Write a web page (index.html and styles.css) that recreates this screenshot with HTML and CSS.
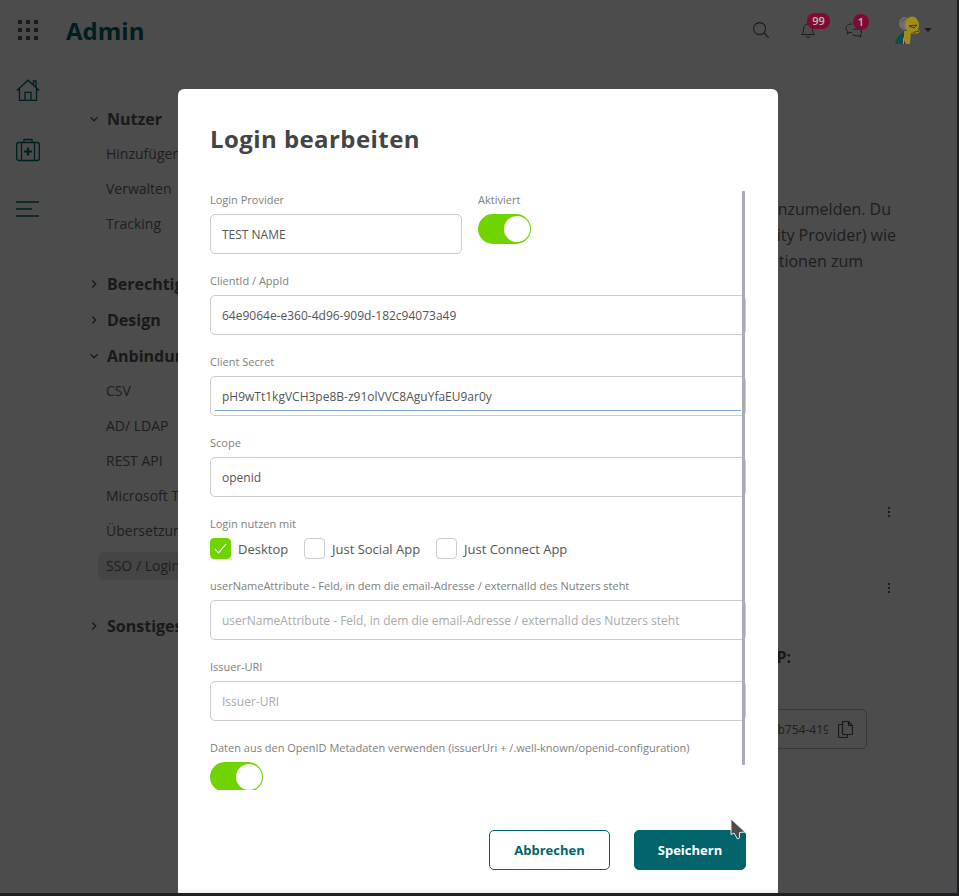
FILE: index.html
```html
<!DOCTYPE html>
<html lang="de">
<head>
<meta charset="utf-8">
<title>Admin</title>
<link rel="stylesheet" href="styles.css">
</head>
<body>
<div class="app">
  <header class="topbar">
    <svg class="grid-icon" width="20" height="20" viewBox="0 0 20 20"><g fill="#5a5a5a"><rect x="0" y="0" width="4" height="4"/><rect x="8" y="0" width="4" height="4"/><rect x="16" y="0" width="4" height="4"/><rect x="0" y="8" width="4" height="4"/><rect x="8" y="8" width="4" height="4"/><rect x="16" y="8" width="4" height="4"/><rect x="0" y="16" width="4" height="4"/><rect x="8" y="16" width="4" height="4"/><rect x="16" y="16" width="4" height="4"/></g></svg>
    <h1 class="brand">Admin</h1>
    <div class="actions">
      <svg class="search" width="16" height="16" viewBox="0 0 16 16" fill="none" stroke="#555" stroke-width="1.1"><circle cx="6.6" cy="6.6" r="6"/><path d="M11 11l4.8 4.8"/></svg>
      <div class="notify bell">
        <svg width="14" height="16" viewBox="0 0 14 16" fill="none" stroke="#555" stroke-width="1"><path d="M.6 12.6c1.6-1.4 1.7-3 1.8-5C2.5 4.500 4.200 2 7 2s4.500 2.500 4.600 5.600c.1 2 .2 3.600 1.800 5z"/><path d="M7 .5V2M5 14.500c.6.9 3.400.9 4 0"/></svg>
        <span class="badge badge-wide">99</span>
      </div>
      <div class="notify chat">
        <svg width="18" height="15" viewBox="0 0 18 15" fill="none" stroke="#555" stroke-width="1"><path d="M7 1c-3.400 0-6 1.800-6 4.300 0 1.300.7 2.400 1.900 3.200L2 11l3-1.700c.6.100 1.300.2 2 .2"/><path d="M8 7c2.500-1.800 7-1.500 8.300 1 .7 1.500.2 3-1 3.900l.7 2.100-2.700-1.300c-2.200.5-4.500 0-5.600-1.200"/></svg>
        <span class="badge badge-dot">1</span>
      </div>
      <svg class="avatar" width="28" height="28" viewBox="0 0 28 28"><path d="M2 28C3 22 6 18 11 16l3 12z" fill="#0d4f4c"/><path d="M11 15h7l-1 13h-6z" fill="#a08c1a"/><path d="M10 21l4 7h-4z" fill="#8f9a86"/><path d="M11 24l2 4h-2z" fill="#7c1c2a"/><ellipse cx="11.500" cy="7.500" rx="5.500" ry="6.500" fill="#6e6e6e"/><ellipse cx="19" cy="9" rx="7" ry="8.500" fill="#a08c1a"/><path d="M22 12l5 3-2 2.500h-5z" fill="#a08c1a"/><path d="M16 10l8-1-3 3zM20 16.500l6-1.500" stroke="#2d2a10" stroke-width=".8" fill="none"/><path d="M8 6c1.500-2 3-3 5-3" stroke="#4a4a4a" stroke-width=".8" fill="none"/></svg>
      <span class="caret"></span>
    </div>
  </header>

  <div class="workspace">
    <aside class="rail">
      <svg width="24" height="24" viewBox="0 0 24 24" fill="none" stroke="#00646a" stroke-width="1.3"><path d="M.8 12.500L12 2.200l11.200 10.300M3.500 10.200V22.300h17V10.200M9 22.300v-8h6v8M17.500 6.500V3h2.500v5.800"/></svg>
      <svg width="24" height="24" viewBox="0 0 24 24" fill="none" stroke="#00646a" stroke-width="1.3"><rect x=".7" y="4.500" width="22.600" height="18" rx="2"/><path d="M8 4.500V1.500h8v3M5.500 4.500v18M18.500 4.500v18"/><path d="M12 9.500v8M8 13.500h8" stroke-width="2.200"/></svg>
      <svg width="24" height="24" viewBox="0 0 24 24" fill="none" stroke="#00646a" stroke-width="1.500"><path d="M0 4h23M0 11h16M0 18h23"/></svg>
    </aside>

    <nav class="nav">
      <div class="nav-head"><svg class="chev" width="8" height="8" viewBox="0 0 8 8"><path d="M.5 2.300L4 5.700l3.500-3.400"/></svg>Nutzer</div>
      <a class="nav-item">Hinzufügen</a>
      <a class="nav-item">Verwalten</a>
      <a class="nav-item">Tracking</a>
      <div class="nav-head nav-spaced"><svg class="chev" width="8" height="8" viewBox="0 0 8 8"><path d="M2.300.5L5.700 4 2.300 7.500"/></svg>Berechtigungen</div>
      <div class="nav-head nav-design"><svg class="chev" width="8" height="8" viewBox="0 0 8 8"><path d="M2.300.5L5.700 4 2.300 7.500"/></svg>Design</div>
      <div class="nav-head nav-open"><svg class="chev" width="8" height="8" viewBox="0 0 8 8"><path d="M.5 2.300L4 5.700l3.500-3.400"/></svg>Anbindungen</div>
      <a class="nav-item">CSV</a>
      <a class="nav-item">AD/ LDAP</a>
      <a class="nav-item">REST API</a>
      <a class="nav-item">Microsoft Teams</a>
      <a class="nav-item">Übersetzungen</a>
      <a class="nav-item nav-active">SSO / Login</a>
      <div class="nav-head nav-last"><svg class="chev" width="8" height="8" viewBox="0 0 8 8"><path d="M2.300.5L5.700 4 2.300 7.500"/></svg>Sonstiges</div>
    </nav>

    <main class="main">
      <p class="intro">
        <span class="intro-line line-a">Hier kannst du Login Provider einrichten, um dich per SSO anzumelden. Du</span>
        <span class="intro-line">kannst dafür einen externen Dienst (Identity Provider) wie</span>
        <span class="intro-line line-c">zum Beispiel Azure AD nutzen. Weitere Informationen zum</span>
      </p>
      <div class="provider-row provider-first"><span class="kebab"><i></i><i></i><i></i></span></div>
      <div class="provider-row"><span class="kebab"><i></i><i></i><i></i></span></div>
      <h2 class="idp-title">Redirect-URL für deinen IdP:</h2>
      <div class="copy-box">
        <span class="copy-text">64e9064e-b754-4199-909d-182c94073a49</span>
        <svg width="15" height="17" viewBox="0 0 15 17" fill="none" stroke="#555" stroke-width="1.200"><path d="M4.500 3.500H1.500a1 1 0 0 0-1 1v11a1 1 0 0 0 1 1h7a1 1 0 0 0 1-1v-2"/><path d="M4.500 1.500a1 1 0 0 1 1-1h5l4 4v8a1 1 0 0 1-1 1h-8a1 1 0 0 1-1-1zM10.500.5v4h4"/></svg>
      </div>
    </main>
  </div>

  <div class="scrim"></div>

  <section class="dialog">
    <h2 class="dialog-title">Login bearbeiten</h2>
    <div class="dialog-scroll">
      <form class="form">
        <div class="form-top">
          <div class="field field-provider">
            <label class="label">Login Provider</label>
            <div class="input">TEST NAME</div>
          </div>
          <div class="field">
            <label class="label">Aktiviert</label>
            <span class="switch"><span class="knob"></span></span>
          </div>
        </div>
        <div class="field">
          <label class="label">ClientId / AppId</label>
          <div class="input">64e9064e-e360-4d96-909d-182c94073a49</div>
        </div>
        <div class="field">
          <label class="label">Client Secret</label>
          <div class="input input-secret">pH9wTt1kgVCH3pe8B-z91olVVC8AguYfaEU9ar0y<span class="focus-line"></span></div>
        </div>
        <div class="field">
          <label class="label">Scope</label>
          <div class="input">openid</div>
        </div>
        <div class="field">
          <label class="label label-checks">Login nutzen mit</label>
          <div class="checks">
            <span class="check check-first"><span class="box box-on"><svg width="13" height="11" viewBox="0 0 13 11" fill="none" stroke="#fff" stroke-width="1.100"><path d="M1 6l3.500 3.800L12 1"/></svg></span>Desktop</span>
            <span class="check check-second"><span class="box"></span>Just Social App</span>
            <span class="check"><span class="box"></span>Just Connect App</span>
          </div>
        </div>
        <div class="field">
          <label class="label">userNameAttribute - Feld, in dem die email-Adresse / externalId des Nutzers steht</label>
          <div class="input input-empty">userNameAttribute - Feld, in dem die email-Adresse / externalId des Nutzers steht</div>
        </div>
        <div class="field">
          <label class="label">Issuer-URI</label>
          <div class="input input-empty">Issuer-URI</div>
        </div>
        <div class="field">
          <label class="label">Daten aus den OpenID Metadaten verwenden (issuerUri + /.well-known/openid-configuration)</label>
          <span class="switch"><span class="knob"></span></span>
        </div>
      </form>
      <span class="scrollbar"></span>
    </div>
    <div class="dialog-actions">
      <button class="btn btn-ghost" type="button">Abbrechen</button>
      <button class="btn btn-solid" type="button">Speichern</button>
    </div>
  </section>

  <svg class="cursor" width="16" height="23" viewBox="0 0 16 23"><path d="M1 1v15.500l3-1.500 3.500 6 2-1V14.500L15 14z" fill="#4a4a4a" stroke="#e8e8e8" stroke-width="1"/></svg>
</div>
</body>
</html>
```

FILE: styles.css
```css
* { box-sizing: border-box; }
html, body { margin: 0; height: 100%; }
body {
  background: #1c2024;
  font-family: "Open Sans", "Liberation Sans", sans-serif;
  overflow: hidden;
}
.app {
  position: relative;
  width: 957px;
  height: 893px;
  background: #fff;
  overflow: hidden;
}
.scrim {
  position: absolute;
  inset: 0;
  background: rgba(0, 0, 0, .7);
  z-index: 10;
}

/* top bar */
.topbar {
  display: flex;
  align-items: center;
  height: 60px;
  padding: 0 25px 0 18px;
}
.grid-icon { flex: none; }
.brand {
  margin: 0 0 0 28px;
  font-size: 24px;
  font-weight: 700;
  color: #00646a;
}
.actions {
  display: flex;
  align-items: center;
  margin-left: auto;
}
.notify { position: relative; display: flex; }
.bell { margin-left: 32px; }
.chat { margin-left: 30px; }
.badge {
  position: absolute;
  top: -9px;
  z-index: 11;
  height: 16px;
  border-radius: 8px;
  background: #7f0a33;
  color: #bbb;
  font-size: 11px;
  font-weight: 600;
  line-height: 16px;
  text-align: center;
}
.badge-wide { left: 6px; width: 23px; }
.badge-dot { left: 8px; width: 16px; }
.avatar {
  margin-left: 30px;
  position: relative;
  z-index: 11;
}
.caret {
  margin-left: 3px;
  width: 0;
  height: 0;
  border-left: 4px solid transparent;
  border-right: 4px solid transparent;
  border-top: 4px solid #555;
}

/* page body */
.workspace { display: flex; }
.rail {
  flex: none;
  display: flex;
  flex-direction: column;
  gap: 36px;
  width: 66px;
  padding: 18px 0 0 16px;
}
.nav {
  flex: none;
  width: 140px;
  padding: 41px 0 0 24px;
  color: #555;
  white-space: nowrap;
}
.nav-head {
  display: flex;
  align-items: center;
  height: 35px;
  font-size: 16px;
  font-weight: 700;
}
.nav-spaced { margin-top: 25px; }
.nav-design { margin-top: 1px; }
.nav-open { height: 36px; margin: 1px 0 -1px; }
.nav-last { margin-top: 28.500px; }
.chev {
  flex: none;
  margin-right: 9px;
  fill: none;
  stroke: #555;
  stroke-width: 1.400;
}
.nav-item {
  display: flex;
  align-items: center;
  height: 35px;
  padding-left: 16px;
  font-size: 14px;
  color: #666;
}
.nav-active {
  height: 28px;
  margin: 3.500px 0 3.500px 8px;
  padding-left: 8px;
  width: 140px;
  border-radius: 5px;
  background: #e6e6e6;
}
.main {
  flex: 1;
  min-width: 0;
  display: flex;
  flex-direction: column;
  padding: 136px 61px 0 0;
  color: #666;
}
.intro {
  margin: 0;
  font-size: 16px;
  line-height: 26px;
}
.intro-line {
  display: flex;
  justify-content: flex-end;
  white-space: nowrap;
}
.line-a { padding-right: 5px; }
.line-c { padding-right: 33px; }
.provider-row {
  display: flex;
  justify-content: flex-end;
  align-items: center;
  height: 76px;
  padding-right: 6px;
}
.provider-first { margin-top: 200px; }
.kebab { display: flex; flex-direction: column; gap: 2px; }
.kebab i { display: block; width: 2px; height: 2px; background: #555; }
.idp-title {
  align-self: flex-end;
  margin: 19px 105px 0 0;
  font-size: 16px;
  line-height: 24px;
  font-weight: 700;
  color: #555;
  white-space: nowrap;
}
.copy-box {
  align-self: flex-end;
  display: flex;
  align-items: center;
  gap: 10px;
  width: 159px;
  height: 40px;
  margin: 40px 29px 0 0;
  padding: 0 13px 0 10px;
  border: 1px solid #bbb;
  border-radius: 5px;
  font-size: 12px;
}
.copy-text {
  flex: 1;
  min-width: 0;
  overflow: hidden;
  white-space: nowrap;
}
.copy-box svg { flex: none; }

/* dialog */
.dialog {
  position: absolute;
  left: 178px;
  top: 89px;
  z-index: 20;
  width: 600px;
  height: 804px;
  padding: 32px 32px 0;
  background: #fff;
  border-radius: 6px 6px 0 0;
  box-shadow: inset 0 -6px 6px -6px rgba(0, 0, 0, .12);
}
.dialog-title {
  margin: 0 0 33px;
  font-size: 24px;
  line-height: 36px;
  font-weight: 700;
  letter-spacing: .43px;
  color: #444;
}
.dialog-scroll {
  position: relative;
  height: 600px;
  width: 536px;
  overflow: hidden;
}
.form { display: flex; flex-direction: column; gap: 17px; }
.form-top { display: flex; gap: 16px; }
.field-provider { width: 252px; flex: none; }
.label {
  display: block;
  height: 24px;
  padding-top: 2px;
  font-size: 11px;
  line-height: 15px;
  color: #808080;
  white-space: nowrap;
}
.input {
  position: relative;
  display: flex;
  align-items: center;
  height: 40px;
  padding: 0 11px;
  border: 1px solid #ccc;
  border-radius: 5px;
  font-size: 12px;
  color: #555;
  white-space: nowrap;
}
.input-empty { color: #aaa; }
.focus-line {
  position: absolute;
  left: 4px;
  right: 4px;
  bottom: 4px;
  height: 1px;
  background: #7ba6de;
}
.switch {
  position: relative;
  display: block;
  width: 53px;
  height: 30px;
  border-radius: 15px;
  background: #6fd400;
}
.knob {
  position: absolute;
  top: 2px;
  right: 1px;
  width: 26px;
  height: 26px;
  border-radius: 50%;
  background: #fff;
}
.label-checks { height: 17px; }
.checks {
  display: flex;
  align-items: center;
  margin-top: 7px;
  font-size: 13px;
  color: #555;
}
.check { display: flex; align-items: center; gap: 7px; }
.check-first { width: 94px; }
.check-second { width: 132px; }
.box {
  display: flex;
  align-items: center;
  justify-content: center;
  width: 21px;
  height: 21px;
  border: 1px solid #ccc;
  border-radius: 4px;
}
.box-on { border-color: #6fd400; background: #6fd400; }
.scrollbar {
  position: absolute;
  left: 532px;
  top: 1px;
  width: 3px;
  height: 574px;
  border-radius: 1px;
  background: #aaaab2;
}
.dialog-actions {
  display: flex;
  justify-content: flex-end;
  gap: 24px;
  width: 536px;
  margin-top: 40px;
}
.btn {
  height: 40px;
  border-radius: 5px;
  font-family: inherit;
  font-size: 13px;
  font-weight: 700;
}
.btn-ghost {
  width: 121px;
  border: 1px solid #00646a;
  background: #fff;
  color: #00646a;
}
.btn-solid {
  width: 112px;
  border: 1px solid #00646a;
  background: #00646a;
  color: #fff;
}
.cursor {
  position: absolute;
  left: 730px;
  top: 818px;
  z-index: 30;
}
```
